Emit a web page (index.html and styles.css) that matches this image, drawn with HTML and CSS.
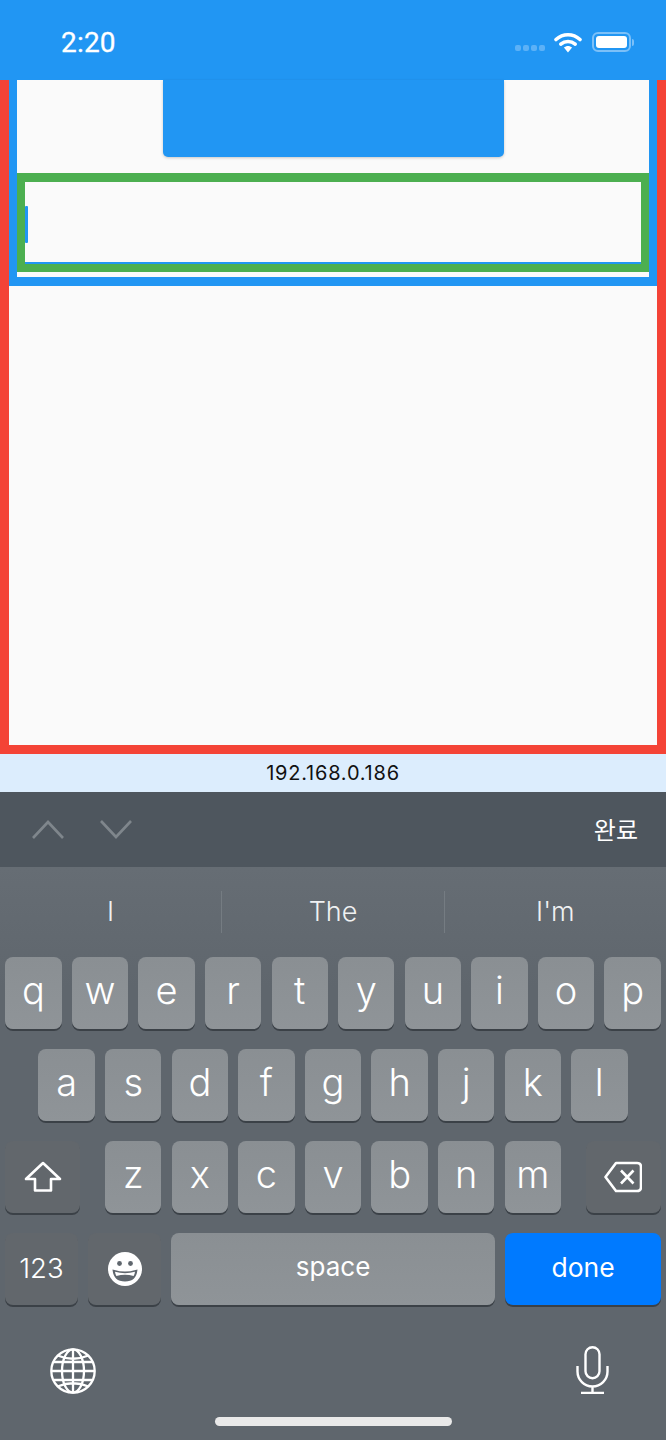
FILE: index.html
```html
<!DOCTYPE html>
<html lang="en">
<head>
<meta charset="utf-8">
<title>Keyboard layout</title>
<link rel="stylesheet" href="styles.css">
</head>
<body>
<div class="app">
  <header class="status">
    <span class="time">2:20</span>
    <div class="status-icons">
      <div class="dots"><i></i><i></i><i></i><i></i></div>
      <svg class="wifi" width="28" height="21" viewBox="0 0 28 21"><path d="M2 7.5C9 1.2 19 1.2 26 7.5" fill="none" stroke="#fff" stroke-width="3.6" stroke-linecap="round"/><path d="M6.8 12.2C11 8.6 17 8.6 21.2 12.2" fill="none" stroke="#fff" stroke-width="3.6" stroke-linecap="round"/><path d="M9.9 15.6C12.3 13.4 15.7 13.4 18.1 15.6L14 20.4Z" fill="#fff"/></svg>
      <div class="battery"><div class="battery-fill"></div></div>
      <div class="battery-nub"></div>
    </div>
  </header>
  <main class="red">
    <div class="blue">
      <div class="top"><div class="tab"></div></div>
      <div class="green">
        <div class="field"><span class="cursor"></span></div>
      </div>
      <div class="strip"></div>
    </div>
  </main>
  <div class="ip">192.168.0.186</div>
  <div class="toolbar">
    <div class="chevrons">
      <svg width="32" height="19" viewBox="0 0 32 19"><path d="M1 18L16 2L31 18" fill="none" stroke="#7f868c" stroke-width="2.6"/></svg>
      <svg width="32" height="19" viewBox="0 0 32 19"><path d="M1 1L16 17L31 1" fill="none" stroke="#7f868c" stroke-width="2.6"/></svg>
    </div>
    <span class="finish">완료</span>
  </div>
  <section class="kb">
    <div class="suggest">
      <span class="word">I</span>
      <span class="word sep">The</span>
      <span class="word sep">I'm</span>
    </div>
    <div class="rows">
      <div class="row">
        <span class="key">q</span><span class="key">w</span><span class="key">e</span><span class="key">r</span><span class="key">t</span><span class="key">y</span><span class="key">u</span><span class="key">i</span><span class="key">o</span><span class="key">p</span>
      </div>
      <div class="row">
        <span class="key">a</span><span class="key">s</span><span class="key">d</span><span class="key">f</span><span class="key">g</span><span class="key">h</span><span class="key">j</span><span class="key">k</span><span class="key">l</span>
      </div>
      <div class="row row-3">
        <span class="key dark wide"><svg width="38" height="32" viewBox="0 0 38 32"><path d="M19 2L2 18H11V29.5H27V18H36Z" fill="none" stroke="#fff" stroke-width="2.6" stroke-linejoin="round"/></svg></span>
        <div class="letters"><span class="key">z</span><span class="key">x</span><span class="key">c</span><span class="key">v</span><span class="key">b</span><span class="key">n</span><span class="key">m</span></div>
        <span class="key dark wide"><svg width="38" height="32" viewBox="0 0 38 32"><path d="M12 2H33Q37 2 37 6V26Q37 30 33 30H12L1.5 16Z" fill="none" stroke="#fff" stroke-width="2.6" stroke-linejoin="round"/><path d="M17 9.5L29.5 22.5M29.5 9.5L17 22.5" fill="none" stroke="#fff" stroke-width="2.6"/></svg></span>
      </div>
      <div class="row">
        <span class="key dark small num">123</span>
        <span class="key dark small"><svg width="36" height="36" viewBox="0 0 36 36"><circle cx="18" cy="18" r="17" fill="#fff"/><circle cx="12.5" cy="12.5" r="2.4" fill="#5f666d"/><circle cx="23.5" cy="12.5" r="2.4" fill="#5f666d"/><path d="M5.5 18.5Q18 22.5 30.5 18.5Q29.5 30.5 18 30.5Q6.5 30.5 5.5 18.5Z" fill="#5f666d"/><path d="M8 20.8Q18 23.6 28 20.8Q27.6 24 26.6 25Q18 22.6 9.4 25Q8.4 24 8 20.8Z" fill="#fff"/></svg></span>
        <span class="key space">space</span>
        <span class="key done">done</span>
      </div>
    </div>
    <div class="bottom">
      <svg width="46" height="46" viewBox="0 0 46 46" fill="none" stroke="#fff" stroke-width="2.3"><circle cx="23" cy="23" r="21.7"/><ellipse cx="23" cy="23" rx="11" ry="21.7"/><path d="M23 1V45M1.2 23H44.8M4 14H42M4 32H42M7.5 7.5Q23 14 38.5 7.5M7.5 38.5Q23 32 38.5 38.5"/></svg>
      <svg width="33" height="48" viewBox="0 0 33 48" fill="none" stroke="#fff" stroke-width="2.4"><rect x="9.5" y="1.2" width="14" height="31" rx="7"/><path d="M1.5 20V25.5A15 15 0 0 0 31.5 25.5V20M16.5 40.5V47M5 47H28"/></svg>
    </div>
    <div class="home"></div>
  </section>
</div>
</body>
</html>
```
FILE: styles.css
```css
* { box-sizing: border-box; }
html, body { margin: 0; padding: 0; }
body { font-family: Inter, "Liberation Sans", sans-serif; background: #5f666d; }
.app { width: 666px; height: 1440px; overflow: hidden; display: flex; flex-direction: column; }

.status { height: 80px; flex: none; background: #2196f3; display: flex; align-items: flex-start; justify-content: space-between; padding: 27px 32px 0 61px; color: #fff; }
.time { font-family: Roboto, sans-serif; font-size: 28px; font-weight: 400; line-height: 31px; letter-spacing: 0.2px; -webkit-text-stroke: 0.3px #fff; }
.status-icons { display: flex; align-items: flex-start; margin-top: 5px; }
.dots { display: flex; gap: 2px; margin-top: 13px; margin-right: 9px; }
.dots i { width: 6px; height: 6px; border-radius: 2px; background: #5cb1f7; display: block; }
.wifi { margin-right: 10px; display: block; }
.battery { width: 39px; height: 20px; border: 2px solid #7cc0f8; border-radius: 6px; padding: 2px; }
.battery-fill { height: 100%; background: #fff; border-radius: 3px; }
.battery-nub { width: 2px; height: 7px; margin-top: 6.5px; margin-left: 1px; border-radius: 0 2px 2px 0; background: #7cc0f8; }

.red { height: 674px; flex: none; background: #fafafa; border: solid #f44336; border-width: 0 9px 9px; }
.blue { background: #fafafa; border: solid #2196f3; border-width: 0 8px 9px; }
.top { height: 93px; display: flex; justify-content: center; align-items: flex-start; }
.tab { width: 341px; height: 76.5px; background: #2196f3; border-radius: 0 0 5px 5px; box-shadow: 0 1px 3px rgba(0, 0, 0, 0.2); }
.green { height: 99px; border: solid #4caf50; border-width: 9px 8.5px 8px; }
.field { position: relative; height: 82px; background: #fafafa; border-bottom: 2px solid #2196f3; }
.cursor { position: absolute; left: 0; top: 24px; width: 2.5px; height: 37px; background: #2196f3; border-radius: 1px; }
.strip { height: 5px; }

.ip { height: 38px; flex: none; background: #dcedfd; color: #111; text-align: center; font-size: 20px; line-height: 38px; letter-spacing: 0.78px; }

.toolbar { height: 75px; flex: none; background: #4e565e; display: flex; align-items: center; justify-content: space-between; padding: 0 28px 0 32px; }
.chevrons { display: flex; gap: 36px; }
.chevrons svg { display: block; }
.finish { font-family: "Noto Sans CJK KR", sans-serif; font-size: 24px; font-weight: 400; color: #fff; line-height: 30px; margin-top: -2px; }

.kb { flex: 1; background: linear-gradient(#666d74, #5f666d 120px); color: #fff; }
.suggest { height: 90px; display: flex; align-items: center; }
.word { flex: 1; height: 42px; line-height: 42px; text-align: center; font-size: 27px; font-weight: 300; color: #f0f1f2; }
.word.sep { border-left: 1.5px solid #757c82; }

.rows { display: flex; flex-direction: column; gap: 20px; padding: 0 5px; }
.row { display: flex; justify-content: center; gap: 10.2px; height: 72px; }
.row-3 { justify-content: space-between; }
.letters { display: flex; gap: 10.2px; }
.key { width: 56.4px; height: 72px; border-radius: 8px; background: linear-gradient(#8a8f93, #8f9498); box-shadow: 0 2px 0 #3b4147; display: flex; align-items: center; justify-content: center; font-size: 38px; font-weight: 300; line-height: 1; padding-bottom: 6px; color: #fff; }
.dark { background: #62676c; }
.wide { width: 75px; padding-bottom: 0; }
.small { width: 73px; padding-bottom: 0; }
.row .space { width: 324px; font-size: 26px; font-weight: 400; padding-bottom: 4px; }
.row .done { width: 156px; background: #007aff; font-size: 26.5px; font-weight: 400; padding-bottom: 4px; }
.num { font-size: 27.5px; }

.bottom { display: flex; justify-content: space-between; align-items: flex-end; padding: 0 57px 0 50px; margin-top: 41px; }
.bottom svg { display: block; }
.home { width: 237px; height: 9px; margin: 23px auto 0; border-radius: 5px; background: #e9e9e9; }
```
